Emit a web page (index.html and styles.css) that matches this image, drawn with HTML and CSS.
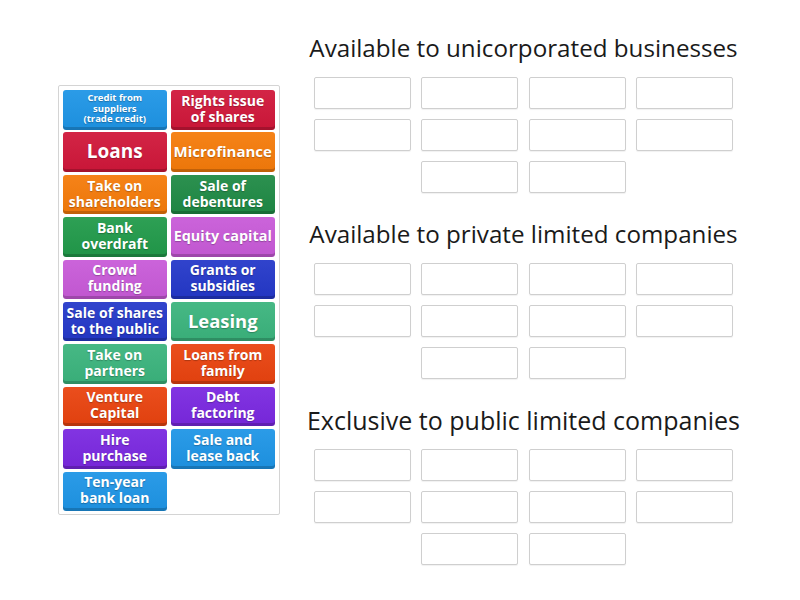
FILE: index.html
```html
<!DOCTYPE html>
<html>
<head>
<meta charset="utf-8">
<link rel="stylesheet" href="styles.css">
</head>
<body>
<div class="page">
  <div class="bank">
    <div class="tile c-lblue tiny">Credit from<br>suppliers<br>(trade credit)</div>
    <div class="tile c-red">Rights issue<br>of shares</div>
    <div class="tile c-red big">Loans</div>
    <div class="tile c-orange wide">Microfinance</div>
    <div class="tile c-orange">Take on<br>shareholders</div>
    <div class="tile c-dgreen">Sale of<br>debentures</div>
    <div class="tile c-green">Bank<br>overdraft</div>
    <div class="tile c-magenta mid">Equity capital</div>
    <div class="tile c-magenta">Crowd<br>funding</div>
    <div class="tile c-blue">Grants or<br>subsidies</div>
    <div class="tile c-blue">Sale of shares<br>to the public</div>
    <div class="tile c-teal big2">Leasing</div>
    <div class="tile c-teal">Take on<br>partners</div>
    <div class="tile c-rorange">Loans from<br>family</div>
    <div class="tile c-rorange">Venture<br>Capital</div>
    <div class="tile c-purple">Debt<br>factoring</div>
    <div class="tile c-purple">Hire<br>purchase</div>
    <div class="tile c-lblue">Sale and<br>lease back</div>
    <div class="tile c-lblue">Ten-year<br>bank loan</div>
  </div>
  <div class="groups">
    <section class="group">
      <h2 class="group-title">Available to unicorporated businesses</h2>
      <div class="slots">
        <div class="slot"></div><div class="slot"></div><div class="slot"></div><div class="slot"></div>
        <div class="slot"></div><div class="slot"></div><div class="slot"></div><div class="slot"></div>
        <div class="slot"></div><div class="slot"></div>
      </div>
    </section>
    <section class="group">
      <h2 class="group-title">Available to private limited companies</h2>
      <div class="slots">
        <div class="slot"></div><div class="slot"></div><div class="slot"></div><div class="slot"></div>
        <div class="slot"></div><div class="slot"></div><div class="slot"></div><div class="slot"></div>
        <div class="slot"></div><div class="slot"></div>
      </div>
    </section>
    <section class="group">
      <h2 class="group-title large">Exclusive to public limited companies</h2>
      <div class="slots">
        <div class="slot"></div><div class="slot"></div><div class="slot"></div><div class="slot"></div>
        <div class="slot"></div><div class="slot"></div><div class="slot"></div><div class="slot"></div>
        <div class="slot"></div><div class="slot"></div>
      </div>
    </section>
  </div>
</div>
</body>
</html>
```
FILE: styles.css
```css
* { box-sizing: border-box; }
html, body { margin: 0; padding: 0; background: #fff; }
body { font-family: "Open Sans", "DejaVu Sans", sans-serif; color: #1a1a1a; }

.page {
  display: flex;
  align-items: flex-start;
  width: 800px;
  height: 600px;
  overflow: hidden;
}

.bank {
  flex: none;
  margin-left: 58px;
  margin-top: 85px;
  width: 222px;
  border: 1px solid #d4d4d4;
  border-radius: 2px;
  padding: 4px 4px 3px 4px;
  display: grid;
  grid-template-columns: 103.5px 103.5px;
  grid-auto-rows: 39.5px;
  column-gap: 4.5px;
  row-gap: 2.9px;
}

.tile {
  display: flex;
  align-items: center;
  justify-content: center;
  text-align: center;
  color: #fff;
  font-weight: 700;
  font-size: 14px;
  line-height: 16px;
  padding: 0 1px 2px;
  white-space: nowrap;
  border-radius: 3px;
  box-shadow: inset 0 -3px 0 rgba(0, 0, 0, 0.18);
  text-shadow: 0 1px 1px rgba(0, 0, 0, 0.25);
  background-image: linear-gradient(rgba(255,255,255,0.06), rgba(0,0,0,0.04));
}
.tile.tiny { font-size: 9.5px; line-height: 10.3px; }
.tile.big { font-size: 19px; line-height: 20px; }
.tile.big2 { font-size: 18.4px; line-height: 20px; }
.tile.wide { font-size: 15px; }
.tile.mid { font-size: 14.4px; }

.c-lblue { background-color: #1e95e6; }
.c-red { background-color: #d0173a; }
.c-orange { background-color: #f57b0a; }
.c-dgreen { background-color: #1f8a45; }
.c-green { background-color: #219a4a; }
.c-magenta { background-color: #c85ad8; }
.c-blue { background-color: #2438c9; }
.c-teal { background-color: #3bb47d; }
.c-rorange { background-color: #e9430f; }
.c-purple { background-color: #7a28e0; }

.groups {
  flex: none;
  margin-left: 23px;
  width: 441px;
  padding-top: 32.5px;
  display: flex;
  flex-direction: column;
  gap: 26px;
}

.group-title {
  margin: 0 0 14px;
  font-weight: 400;
  font-size: 24.2px;
  line-height: 30px;
  text-align: center;
  white-space: nowrap;
  color: #1a1a1a;
}
.group-title.large { font-size: 25px; }

.slots {
  display: flex;
  flex-wrap: wrap;
  justify-content: center;
  column-gap: 10.5px;
  row-gap: 10px;
  width: 420px;
  margin: 0 auto;
}

.slot {
  width: 97px;
  height: 32px;
  border: 1px solid #cfcfcf;
  border-radius: 2px;
  box-shadow: 0 1px 1px rgba(0, 0, 0, 0.06);
  background: #fff;
}
```
